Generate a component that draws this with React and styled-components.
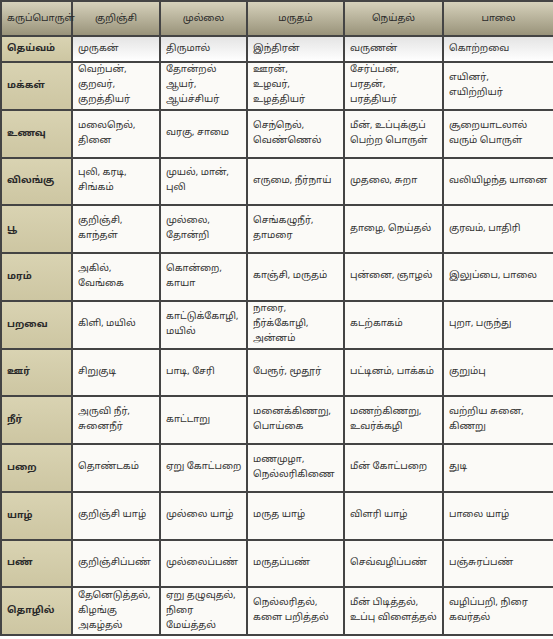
import React from "react";
import styled, { createGlobalStyle } from "styled-components";

const GlobalStyle = createGlobalStyle`
  body {
    margin: 0;
    background: #ffffff;
  }
`;

const cols = [71, 88, 87, 97, 99, 111];

const head = ["கருப்பொருள்", "குறிஞ்சி", "முல்லை", "மருதம்", "நெய்தல்", "பாலை"];

const rows = [
  ["தெய்வம்", ["முருகன்"], ["திருமால்"], ["இந்திரன்"], ["வருணன்"], ["கொற்றவை"]],
  ["மக்கள்", ["வெற்பன்,", "குறவர்,", "குறத்தியர்"], ["தோன்றல்", "ஆயர்,", "ஆய்ச்சியர்"], ["ஊரன்,", "உழவர்,", "உழத்தியர்"], ["சேர்ப்பன்,", "பரதன்,", "பரத்தியர்"], ["எயினர்,", "எயிற்றியர்"]],
  ["உணவு", ["மலைநெல்,", "தினை"], ["வரகு, சாமை"], ["செந்நெல்,", "வெண்ணெல்"], ["மீன், உப்புக்குப்", "பெற்ற பொருள்"], ["சூறையாடலால்", "வரும் பொருள்"]],
  ["விலங்கு", ["புலி, கரடி,", "சிங்கம்"], ["முயல், மான்,", "புலி"], ["எருமை, நீர்நாய்"], ["முதலை, சுறா"], ["வலியிழந்த யானை"]],
  ["பூ", ["குறிஞ்சி,", "காந்தள்"], ["முல்லை,", "தோன்றி"], ["செங்கழுநீர்,", "தாமரை"], ["தாழை, நெய்தல்"], ["குரவம், பாதிரி"]],
  ["மரம்", ["அகில்,", "வேங்கை"], ["கொன்றை,", "காயா"], ["காஞ்சி, மருதம்"], ["புன்னை, ஞாழல்"], ["இலுப்பை, பாலை"]],
  ["பறவை", ["கிளி, மயில்"], ["காட்டுக்கோழி,", "மயில்"], ["நாரை,", "நீர்க்கோழி,", "அன்னம்"], ["கடற்காகம்"], ["புறா, பருந்து"]],
  ["ஊர்", ["சிறுகுடி"], ["பாடி, சேரி"], ["பேரூர், மூதூர்"], ["பட்டினம், பாக்கம்"], ["குறும்பு"]],
  ["நீர்", ["அருவி நீர்,", "சுனைநீர்"], ["காட்டாறு"], ["மனைக்கிணறு,", "பொய்கை"], ["மணற்கிணறு,", "உவர்க்கழி"], ["வற்றிய சுனை,", "கிணறு"]],
  ["பறை", ["தொண்டகம்"], ["ஏறு கோட்பறை"], ["மணமுழா,", "நெல்லரிகிணை"], ["மீன் கோட்பறை"], ["துடி"]],
  ["யாழ்", ["குறிஞ்சி யாழ்"], ["முல்லை யாழ்"], ["மருத யாழ்"], ["விளரி யாழ்"], ["பாலை யாழ்"]],
  ["பண்", ["குறிஞ்சிப்பண்"], ["முல்லைப்பண்"], ["மருதப்பண்"], ["செவ்வழிப்பண்"], ["பஞ்சுரப்பண்"]],
  ["தொழில்", ["தேனெடுத்தல்,", "கிழங்கு", "அகழ்தல்"], ["ஏறு தழுவுதல்,", "நிரை", "மேய்த்தல்"], ["நெல்லரிதல்,", "களை பறித்தல்"], ["மீன் பிடித்தல்,", "உப்பு விளைத்தல்"], ["வழிப்பறி, நிரை", "கவர்தல்"]],
];

const Table = styled.table`
  width: 553px;
  border-collapse: collapse;
  table-layout: fixed;
  font-family: "Noto Sans Tamil", "Lohit Tamil", "Noto Sans", "DejaVu Sans", sans-serif;
  color: #333333;
  font-size: 9.6px;
`;

const Row = styled.tr`
  height: ${(p) => p.$h}px;
`;

const Th = styled.th`
  border: 2px solid #444444;
  background: linear-gradient(#d6d1bb, #99937a);
  font-weight: normal;
  color: #2a2a2a;
  text-align: ${(p) => (p.$left ? "left" : "center")};
  padding: 0 5px;
  white-space: nowrap;
`;

const Label = styled.td`
  border: 2px solid #444444;
  background: linear-gradient(#d9d3b2, #cdc6a2);
  font-weight: bold;
  color: #2a2a2a;
  padding: 0 5px;
  vertical-align: middle;
`;

const Cell = styled.td`
  border: 2px solid #444444;
  background: ${(p) => (p.$first ? "linear-gradient(#e4e4e4, #ffffff)" : "#fbfaf7")};
  padding: 0 5px;
  line-height: 15px;
  vertical-align: middle;
`;

const Line = styled.div`
  white-space: nowrap;
`;

export default function App() {
  return (
    <>
      <GlobalStyle />
      <Table>
        <colgroup>
          {cols.map((w, i) => (
            <col key={i} style={{ width: w }} />
          ))}
        </colgroup>
        <thead>
          <Row $h={35}>
            {head.map((h, i) => (
              <Th key={h} $left={i === 0}>
                {h}
              </Th>
            ))}
          </Row>
        </thead>
        <tbody>
          {rows.map(([label, ...cells], r) => (
            <Row key={label} $h={r === 0 ? 26 : 47.75}>
              <Label>{label}</Label>
              {cells.map((lines, c) => (
                <Cell key={c} $first={r === 0}>
                  {lines.map((l) => (
                    <Line key={l}>{l}</Line>
                  ))}
                </Cell>
              ))}
            </Row>
          ))}
        </tbody>
      </Table>
    </>
  );
}
